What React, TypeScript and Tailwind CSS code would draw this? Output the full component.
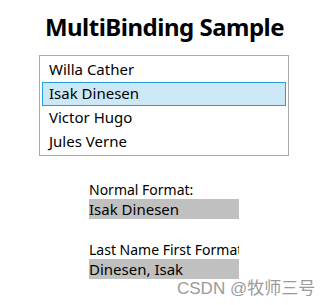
import React, { useState } from "react";

const authors = ["Willa Cather", "Isak Dinesen", "Victor Hugo", "Jules Verne"];

const App = () => {
  const [selected, setSelected] = useState(1);
  const name = authors[selected];
  const parts = name.split(" ");
  const lastFirst = `${parts[1]}, ${parts[0]}`;

  return (
    <div
      className="relative w-[329px] h-[305px] bg-white text-black overflow-hidden"
      style={{ fontFamily: '"Noto Sans", "Open Sans", sans-serif' }}
    >
      <h1 className="pt-[11px] text-center text-[24px] leading-[32px] font-bold tracking-[-0.5px]">
        MultiBinding Sample
      </h1>
      <div className="ml-[39px] mt-[12px] w-[250px] h-[101px] border border-[#ababab] p-[2px]">
        {authors.map((a, i) => (
          <div
            key={a}
            onClick={() => setSelected(i)}
            className={`h-[24px] pl-[6px] text-[15px] leading-[21px] border ${
              i === selected
                ? "bg-[#cce8f7] border-[#26a0da]"
                : "border-transparent"
            }`}
          >
            {a}
          </div>
        ))}
      </div>
      <div className="ml-[89px] mt-[24px] w-[150px] flex flex-col text-[14px]">
        <div className="h-[19px] leading-[19px] whitespace-nowrap overflow-hidden">
          Normal Format:
        </div>
        <div className="h-[20px] leading-[20px] bg-[#c0c0c0] text-[15px]">
          {name}
        </div>
        <div className="mt-[21px] h-[19px] leading-[19px] whitespace-nowrap overflow-hidden">
          Last Name First Format:
        </div>
        <div className="h-[20px] leading-[20px] bg-[#c0c0c0] text-[15px]">
          {lastFirst}
        </div>
      </div>
      <div
        className="absolute left-[177px] top-[278px] text-[17px] leading-[21px] text-[#9a9a9a] whitespace-nowrap"
        style={{ fontFamily: '"Liberation Sans", "Noto Sans CJK SC", sans-serif' }}
      >
        CSDN @牧师三号
      </div>
    </div>
  );
};

export default App;
